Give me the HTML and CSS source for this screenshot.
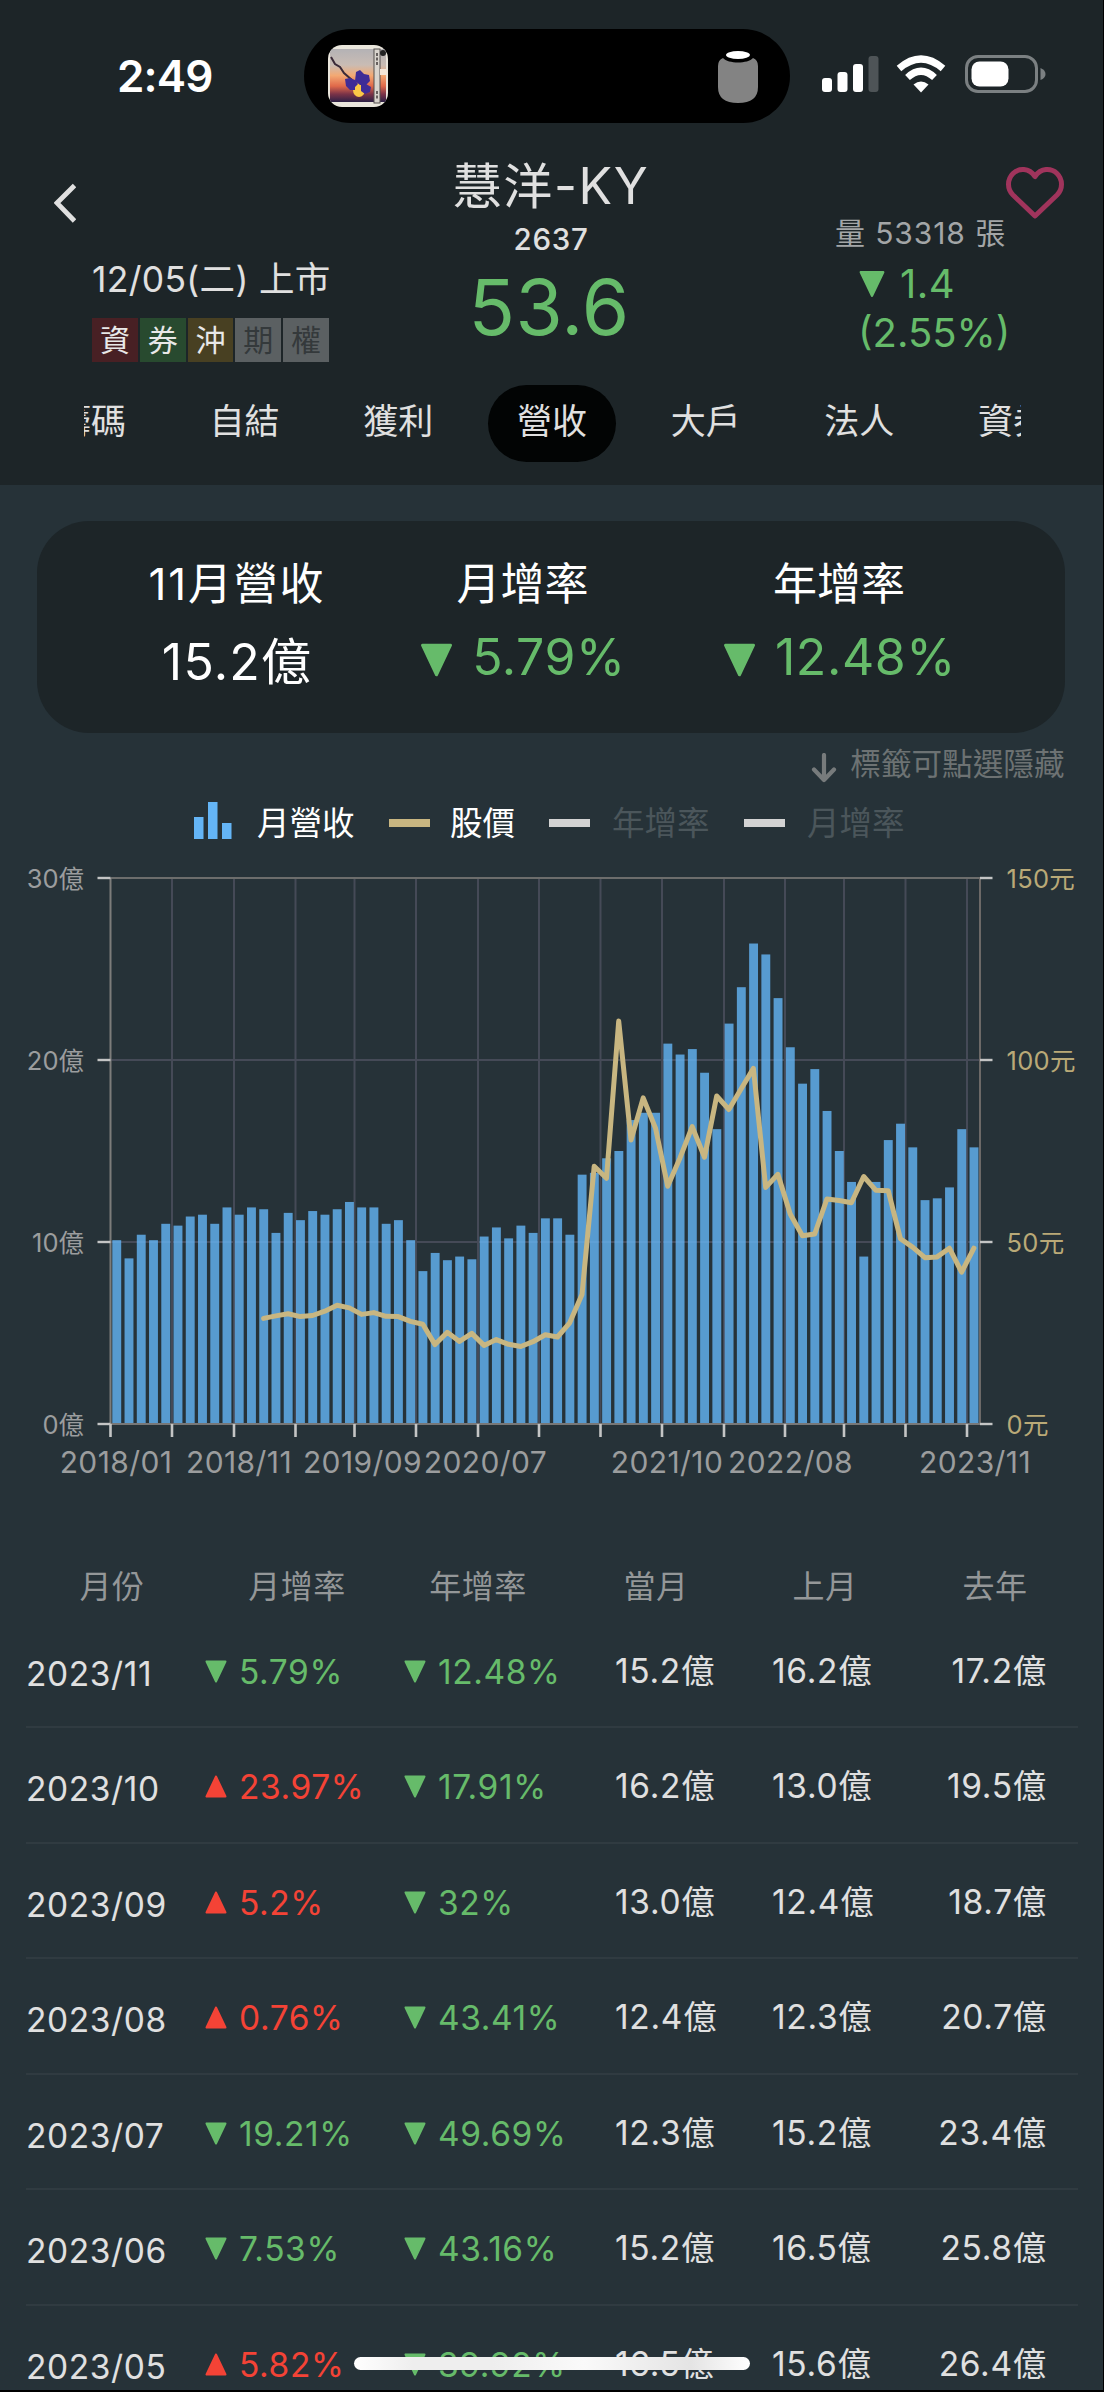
FILE: index.html
```
<!doctype html>
<html lang="zh-Hant">
<head>
  <meta charset="utf-8">
  <title>慧洋-KY 2637</title>
  <link rel="stylesheet" href="styles.css">
</head>
<body>
  <div class="phone">
    <header>
      <div class="status">
        <span class="clock">2:49</span>
        <div class="island">
          <svg class="thumb" width="60" height="62" viewBox="0 0 60 62">
            <defs>
              <linearGradient id="sky" x1="0" y1="0" x2="0" y2="1">
                <stop offset="0" stop-color="#b4b2b5"/>
                <stop offset=".3" stop-color="#c9bcb4"/>
                <stop offset=".5" stop-color="#f3a973"/>
                <stop offset=".7" stop-color="#e0694a"/>
                <stop offset=".85" stop-color="#7b3348"/>
                <stop offset="1" stop-color="#2c2045"/>
              </linearGradient>
              <clipPath id="round"><rect width="60" height="62" rx="14"/></clipPath>
            </defs>
            <g clip-path="url(#round)">
              <rect width="60" height="62" fill="#eae6dc"/>
              <rect x="2" y="4" width="56" height="53" fill="url(#sky)"/>
              <ellipse cx="31" cy="45" rx="6" ry="7" fill="#fbc846"/>
              <path d="M3 12l4 7 5 3 4 6 8 7" fill="none" stroke="#3a2a38" stroke-width="2"/>
              <g fill="#3f2c96">
                <path d="M17 34l5-1 5 2 3 4-3 3 0 3-5 0-4-4z"/>
                <path d="M28 27l4-2 4 4 5 1 1 6-4 4-6 0-5-4z"/>
                <path d="M33 40l5-1 5 3-1 5-5 2-4-3z"/>
              </g>
              <rect x="46" y="4" width="6" height="54" fill="#d9d4cd" stroke="#55504f"/>
              <path d="M49 8v12M49 46v9" stroke="#66605e" stroke-width="2" stroke-dasharray="3 1.500"/>
              <rect x="52" y="24" width="7" height="6" fill="#f3e6d8"/>
              <circle cx="55" cy="8" r="3" fill="#222"/>
            </g>
          </svg>
          <svg class="pod" width="40" height="52" viewBox="0 0 40 52">
            <path d="M5 7C10 13 30 13 35 7Q40 9 40 15V36Q40 52 20 52T0 36V15Q0 9 5 7Z" fill="#838383"/>
            <ellipse cx="20" cy="4" rx="12" ry="4" fill="#fff"/>
          </svg>
        </div>
        <svg class="signals" width="226" height="40" viewBox="0 0 226 40">
          <g fill="#fff">
            <rect x="0" y="24" width="10" height="14" rx="3"/>
            <rect x="15.500" y="18" width="10" height="20" rx="3"/>
            <rect x="31" y="10" width="10" height="28" rx="3"/>
            <rect x="46.500" y="2" width="10" height="36" rx="3" opacity=".22"/>
          </g>
          <g fill="none" stroke="#fff" stroke-width="7">
            <path d="M77 14.500Q99 -4.500 121 14.500"/>
            <path d="M85.500 23.500Q99 11 112.500 23.500"/>
          </g>
          <path d="M91.500 30.500Q99 24.500 106.500 30.500L99 38.500Z" fill="#fff"/>
          <rect x="144.500" y="2.500" width="70" height="35" rx="11.500" fill="none" stroke="#7b8082" stroke-width="3"/>
          <rect x="149.500" y="7.500" width="37" height="25" rx="8" fill="#fff"/>
          <path d="M218.500 14q5 2 5 6t-5 6z" fill="#7b8082"/>
        </svg>
      </div>

      <div class="summary">
        <div class="side left">
          <svg class="back" width="22" height="40" viewBox="0 0 22 40"><path d="M20.500 2.500L3 20L20.500 38" fill="none" stroke="#e0e0e0" stroke-width="4.800"/></svg>
          <div class="date">12/05(二) 上市</div>
          <div class="badges">
            <b class="margin">資</b><b class="short">券</b><b class="daytrade">沖</b><b>期</b><b>權</b>
          </div>
        </div>
        <div class="quote">
          <div class="name">慧洋<span>-KY</span></div>
          <div class="code">2637</div>
          <div class="price">53.6</div>
        </div>
        <div class="side right">
          <svg class="heart" width="58" height="52" viewBox="0 0 58 52"><path d="M29 9.500C23 .8 13 .8 7 6.500C1 12.500 1 22 7 28L29 49L51 28C57 22 57 12.500 51 6.500C45 .8 35 .8 29 9.500Z" fill="none" stroke="#a0345c" stroke-width="5" stroke-linejoin="round"/></svg>
          <div class="volume">量 53318 張</div>
          <div class="change"><svg class="tri"><use href="#down"/></svg><span>1.4</span></div>
          <div class="ratio">(2.55%)</div>
        </div>
      </div>

      <nav>
        <a>籌碼</a><a>自結</a><a>獲利</a><a class="active">營收</a><a>大戶</a><a>法人</a><a>資券</a>
      </nav>
    </header>

    <section class="card">
      <div><h2 class="month">11月營收</h2><p class="big">15.2億</p></div>
      <div><h2>月增率</h2><p class="down"><svg class="tri"><use href="#down"/></svg><span>5.79%</span></p></div>
      <div><h2>年增率</h2><p class="down"><svg class="tri"><use href="#down"/></svg><span>12.48%</span></p></div>
    </section>

    <div class="hint">
      <svg width="26" height="30" viewBox="0 0 26 30"><path d="M13 2V26M3 16.500L13 27L23 16.500" fill="none" stroke="#777b7c" stroke-width="4.200" stroke-linecap="round" stroke-linejoin="round"/></svg>
      <span>標籤可點選隱藏</span>
    </div>

    <div class="legend">
      <svg width="38" height="37" viewBox="0 0 38 37" fill="#64b5f6"><rect y="15" width="9.500" height="22"/><rect x="14" width="9.500" height="37"/><rect x="28" y="21" width="9.500" height="16"/></svg>
      <span class="on">月營收</span>
      <i class="gold"></i><span class="on">股價</span>
      <i></i><span>年增率</span>
      <i></i><span>月增率</span>
    </div>

    <svg id="chart" width="1102" height="640" viewBox="0 850 1102 640"></svg>

    <div class="thead">
      <span>月份</span><span>月增率</span><span>年增率</span><span>當月</span><span>上月</span><span>去年</span>
    </div>
    <div id="rows"></div>

    <div class="home"></div>
  </div>

  <svg class="defs">
    <symbol id="down" viewBox="0 0 22 23"><path d="M1.500 1.500H20.500L11 21.500Z" fill="currentColor" stroke="currentColor" stroke-width="2" stroke-linejoin="round"/></symbol>
    <symbol id="up" viewBox="0 0 22 23"><path d="M1.500 21.500H20.500L11 1.500Z" fill="currentColor" stroke="currentColor" stroke-width="2" stroke-linejoin="round"/></symbol>
  </svg>
  <script src="app.js"></script>
</body>
</html>
```
FILE: styles.css
```
body {
  margin: 0;
  background: #000;
  font-family: Inter, "Noto Sans CJK TC", sans-serif;
  color: #e0e0e0;
  overflow: hidden;
}
h2, p { margin: 0; font-weight: 400; }
svg { display: block; }
.defs { position: absolute; width: 0; height: 0; }

.phone {
  position: relative;
  width: 1102.500px;
  height: 2390px;
  overflow: hidden;
  background: #263238;
}

header { height: 485px; background: #1d2528; }

/* status bar */
.status {
  display: flex;
  height: 152px;
  padding: 29px 0 0 117px;
  box-sizing: border-box;
}
.clock {
  width: 187px;
  padding-top: 20px;
  font-size: 44px;
  line-height: 54px;
  font-weight: 600;
  letter-spacing: -0.8px;
  color: #fff;
}
.island {
  display: flex;
  justify-content: space-between;
  width: 486px;
  height: 94px;
  padding: 16px 32px 0 24px;
  box-sizing: border-box;
  border-radius: 47px;
  background: #000;
}
.pod { margin-top: 6px; }
.signals { margin: 25px 0 0 32px; }

/* stock summary */
.summary {
  display: grid;
  grid-template-columns: 400px 302px 400px;
  height: 233px;
}
.back { margin: 31px 0 0 54px; }
.date {
  margin: 29px 0 0 92px;
  font-size: 35.500px;
  line-height: 56px;
  letter-spacing: 0.3px;
  white-space: nowrap;
}
.badges {
  display: flex;
  gap: 2px;
  margin: 10px 0 0 92px;
}
.badges b {
  width: 45.800px;
  height: 44px;
  font-size: 30px;
  font-weight: 400;
  line-height: 44px;
  text-align: center;
  background: #5b6062;
  color: #34393b;
}
.badges .margin { background: #482024; color: #e8e8e8; }
.badges .short { background: #284a2f; color: #e8e8e8; }
.badges .daytrade { background: #484022; color: #e8e8e8; }

.quote { text-align: center; }
.name {
  margin-top: 1px;
  font-size: 49px;
  line-height: 66px;
  letter-spacing: 1.600px;
}
.name span { font-size: 50px; }
.code { font-size: 29.500px; line-height: 38px; font-weight: 500; letter-spacing: 0.7px; }
.price {
  margin-top: 3px;
  font-size: 76.500px;
  line-height: 92px;
  letter-spacing: 0.3px;
  margin-left: -4px;
  color: #66bb6a;
}

.right { position: relative; }
.heart { position: absolute; left: 304px; top: 15px; }
.volume {
  margin: 59px 0 0 133px;
  font-size: 30px;
  line-height: 44px;
  letter-spacing: 0.9px;
  color: #a3a6a7;
}
.change {
  display: flex;
  margin-left: 157px;
  font-size: 40px;
  line-height: 50px;
  letter-spacing: 0.5px;
  color: #66bb6a;
}
.change .tri { width: 26px; height: 28px; margin: 15px 15px 0 0; }
.change span { padding-top: 4px; }
.ratio {
  margin-left: 156px;
  font-size: 40px;
  line-height: 48px;
  color: #66bb6a;
}

nav {
  display: flex;
  justify-content: center;
  width: 937px;
  margin-left: 83.500px;
  overflow: hidden;
}
nav a {
  flex: 0 0 128px;
  margin: 0 12.850px;
  height: 77px;
  border-radius: 39px;
  font-size: 35px;
  line-height: 73px;
  text-align: center;
}
nav .active { background: #020404; }

/* latest month */
.card {
  display: grid;
  grid-template-columns: 286px 285px 348px;
  width: 1028px;
  height: 212px;
  margin: 36px 0 0 37px;
  padding: 34px 52px 0 57px;
  box-sizing: border-box;
  border-radius: 52px;
  background: #1d2528;
  text-align: center;
  color: #fff;
}
.card h2 { font-size: 44px; line-height: 58px; }
.card .month { letter-spacing: 1.800px; }
.card p {
  display: flex;
  justify-content: center;
  font-size: 50px;
  line-height: 60px;
  padding-top: 14px;
  letter-spacing: 0.6px;
}
.card .big { font-size: 50px; padding-top: 19px; letter-spacing: 1.200px; }
.card .tri { width: 33px; height: 34px; margin: 16px 19px 0 1px; }
.down { color: #66bb6a; }
.up { color: #f44336; }

.hint {
  display: flex;
  justify-content: flex-end;
  height: 44px;
  margin: 10px 38px 0 0;
  color: #6d7273;
}
.hint svg { margin: 10px 13px 0 0; }
.hint span { font-size: 30.600px; line-height: 42px; }

.legend {
  display: flex;
  height: 63px;
  padding: 16px 0 0 194px;
  box-sizing: border-box;
  font-size: 32.500px;
  line-height: 42px;
  color: #4b565b;
}
.legend svg { margin-top: -1px; }
.legend span { width: 100px; margin-left: 25px; }
.legend span + i { margin-left: 32px; }
.legend i {
  width: 41px;
  height: 8px;
  margin-top: 16px;
  background: #d3d3d3;
}
.legend .gold { background: #c8b681; }
.legend i + span { margin-left: 22px; }
.legend .gold + span { width: 67px; margin-left: 20px; }
.legend .on { color: #fff; }

#chart text { font-size: 25.500px; fill: #9b9d9e; }
#chart .months text { font-size: 30px; letter-spacing: 0.4px; text-anchor: middle; }
#chart .left text { text-anchor: end; }
#chart .right-axis text { fill: #b9a977; letter-spacing: 0.3px; }

/* monthly table */
.thead {
  display: grid;
  grid-template-columns: 172px 198px 164px 192px 146px 194px;
  height: 123px;
  padding: 74px 0 0 26px;
  box-sizing: border-box;
  font-size: 32px;
  line-height: 46px;
  letter-spacing: 0.5px;
  text-align: center;
  color: #949798;
}
.row {
  display: grid;
  grid-template-columns: 179px 199px 211px 157px 158px 117px;
  height: 115.450px;
  margin: 0 25px 0 26px;
  box-sizing: border-box;
  border-bottom: 2px solid #303b41;
  font-size: 33.500px;
  line-height: 40px;
  letter-spacing: 0.6px;
  white-space: nowrap;
}
.row .date-cell { padding-top: 41px; letter-spacing: 0.6px; }
.row .pct { display: flex; padding-top: 39px; }
.row .pct .tri { width: 22px; height: 23px; margin: 8px 12px 0 0; }
.row .amount { padding-top: 38px; font-size: 33.500px; letter-spacing: 0.7px; }
.row .last { text-align: right; }

.home {
  position: absolute;
  left: 354px;
  top: 2357px;
  width: 396px;
  height: 13px;
  border-radius: 7px;
  background: linear-gradient(90deg, #fff, #eee 15%, #eee 35%, #fafafa 58%, #e4e4e4 85%, #fff);
}
```
FILE: app.js
```
// monthly revenue from 2018/01, unit: 億
var revenue = [
  10.1, 9.1, 10.4, 10.1, 11.0, 10.9, 11.4, 11.5, 11.0, 11.9, 11.5, 11.9,
  11.8, 10.5, 11.6, 11.2, 11.7, 11.5, 11.8, 12.2, 11.9, 11.9, 11.0, 11.2,
  10.1, 8.4, 9.4, 9.0, 9.2, 9.05, 10.3, 10.8, 10.2, 10.9, 10.5, 11.3,
  11.3, 10.4, 13.7, 13.8, 14.6, 15.0, 16.7, 17.1, 17.1, 20.9, 20.3, 20.6,
  19.3, 16.2, 22.0, 24.0, 26.4, 25.8, 23.4, 20.7, 18.7, 19.5, 17.2, 15.0,
  13.3, 9.2, 13.3, 15.6, 16.5, 15.2, 12.3, 12.4, 13.0, 16.2, 15.2
]
// share price from 2019/01
var price = [
  29.0, 29.7, 30.3, 29.5, 29.8, 31, 32.6, 31.9, 30.1, 30.6, 29.6, 29.5,
  28.2, 27.4, 21.8, 25.2, 22.7, 24.9, 21.6, 23.2, 21.9, 21.3, 22.6, 24.5,
  23.9, 27.8, 35.6, 70.8, 67.5, 110.7, 78, 89.6, 81.3, 65.3, 73.1, 81.7,
  73.3, 90.1, 86.4, 92.1, 97.7, 65, 68.6, 57.7, 51.7, 52.2, 61.8, 61.4,
  60.8, 68, 64.2, 64.1, 50.9, 48.6, 45.7, 45.9, 48.3, 41.7, 48.3
]

var L = 110.5, R = 980, T = 878, B = 1424
var step = (R - L) / revenue.length

function line(x1, y1, x2, y2, color, w) {
  return '<line x1="' + x1 + '" y1="' + y1 + '" x2="' + x2 + '" y2="' + y2 +
    '" stroke="' + color + '" stroke-width="' + w + '"/>'
}
function text(x, y, s) {
  return '<text x="' + x + '" y="' + y + '">' + s + '</text>'
}

var out = ''
var grid = [172, 234, 295.5, 354.5, 416, 478, 539, 600.5, 662, 724, 785, 844, 905.5, 967]
grid.forEach(function(x) { out += line(x, T, x, B, '#454a57', 2) })
out += line(L, 1060, R, 1060, '#454a57', 2) + line(L, 1242, R, 1242, '#454a57', 2)
out += line(L, T, R, T, '#6c6d6c', 2)
out += line(L, T, L, B, '#7c7c7a', 2) + line(R, T, R, B, '#6c6967', 2)

revenue.forEach(function(v, i) {
  var h = v * (B - T) / 30
  out += '<rect x="' + (L + i * step + 1.8) + '" y="' + (B - h) + '" width="8.900" height="' + h +
    '" fill="#64b5f6" opacity=".8"/>'
})
out += line(L, B, R, B, '#777', 2)

var pts = price.map(function(v, i) {
  return (L + (i + 12.5) * step).toFixed(1) + ',' + (B - v * (B - T) / 150).toFixed(1)
})
out += '<polyline points="' + pts.join(' ') + '" fill="none" stroke="#c8b681" stroke-width="5" stroke-linejoin="round" stroke-linecap="round"/>'

;[L].concat(grid).forEach(function(x) { out += line(x, B, x, B + 13, '#c4c5c5', 2.6) })

var left = '', right = ''
for (var i = 0; i < 4; i++) {
  var y = B - i * 182
  out += line(97.5, y, L, y, '#c4c5c5', 2.4) + line(R, y, 992.5, y, '#c4c5c5', 2.4)
  left += text(84, y + 10, i * 10 + '億')
  right += text(1006.5, y + 10, i * 50 + '元')
}
out += '<g class="left">' + left + '</g><g class="right-axis">' + right + '</g><g class="months">'
;[[116, '2018/01'], [239, '2018/11'], [362.5, '2019/09'], [485.5, '2020/07'],
  [667, '2021/10'], [790.5, '2022/08'], [975, '2023/11']].forEach(function(m) {
  out += text(m[0], 1472.5, m[1])
})
document.getElementById('chart').innerHTML = out + '</g>'

var rows = [
  ['2023/11', -5.79, -12.48, '15.2', '16.2', '17.2'],
  ['2023/10', 23.97, -17.91, '16.2', '13.0', '19.5'],
  ['2023/09', 5.2, -32, '13.0', '12.4', '18.7'],
  ['2023/08', 0.76, -43.41, '12.4', '12.3', '20.7'],
  ['2023/07', -19.21, -49.69, '12.3', '15.2', '23.4'],
  ['2023/06', -7.53, -43.16, '15.2', '16.5', '25.8'],
  ['2023/05', 5.82, -39.92, '16.5', '15.6', '26.4']
]
function pct(v) {
  var dir = v < 0 ? 'down' : 'up'
  return '<div class="pct ' + dir + '"><svg class="tri"><use href="#' + dir + '"/></svg><span>' +
    Math.abs(v) + '%</span></div>'
}
document.getElementById('rows').innerHTML = rows.map(function(r) {
  return '<div class="row"><div class="date-cell">' + r[0] + '</div>' + pct(r[1]) + pct(r[2]) +
    '<div class="amount">' + r[3] + '億</div><div class="amount">' + r[4] +
    '億</div><div class="amount last">' + r[5] + '億</div></div>'
}).join('')
```
